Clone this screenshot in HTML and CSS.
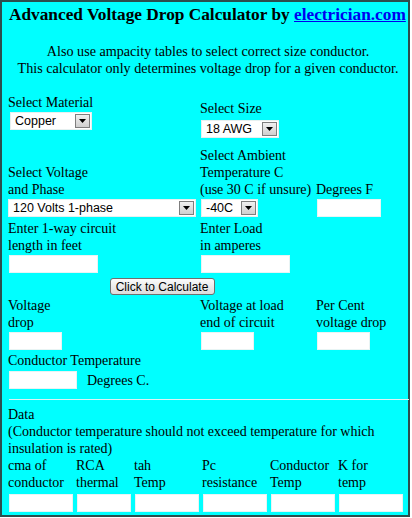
FILE: index.html
```html
<!DOCTYPE html>
<html>
<head>
<meta charset="utf-8">
<link rel="stylesheet" href="styles.css">
</head>
<body>
<div class="box">
  <h1 class="title">Advanced Voltage Drop Calculator by <a href="#">electrician.com</a></h1>
  <p class="intro">Also use ampacity tables to select correct size conductor.<br>This calculator only determines voltage drop for a given conductor.</p>

  <div class="row row-a">
    <div class="cell">
      <div class="lbl">Select Material</div>
      <div class="sel sel-material"><span class="sel-text">Copper</span><span class="arrow"><svg width="7" height="4" viewBox="0 0 7 4"><path d="M0 0H7L3.5 4Z" fill="#000"/></svg></span></div>
    </div>
    <div class="cell cell-size">
      <div class="lbl">Select Size</div>
      <div class="sel sel-size"><span class="sel-text">18 AWG</span><span class="arrow"><svg width="7" height="4" viewBox="0 0 7 4"><path d="M0 0H7L3.5 4Z" fill="#000"/></svg></span></div>
    </div>
    <div class="cell"></div>
  </div>

  <div class="row row-b">
    <div class="lbl">Select Voltage<br>and Phase</div>
    <div class="lbl">Select Ambient<br>Temperature C<br>(use 30 C if unsure)</div>
    <div class="lbl">Degrees F</div>
  </div>
  <div class="row row-ctl">
    <div class="sel sel-volt"><span class="sel-text">120 Volts 1-phase</span><span class="arrow"><svg width="7" height="4" viewBox="0 0 7 4"><path d="M0 0H7L3.5 4Z" fill="#000"/></svg></span></div>
    <div class="sel sel-temp"><span class="sel-text">-40C</span><span class="arrow"><svg width="7" height="4" viewBox="0 0 7 4"><path d="M0 0H7L3.5 4Z" fill="#000"/></svg></span></div>
    <input class="inp inp-f" type="text">
  </div>

  <div class="row row-c">
    <div class="lbl">Enter 1-way circuit<br>length in feet</div>
    <div class="lbl">Enter Load<br>in amperes</div>
    <div></div>
  </div>
  <div class="row row-ctl2">
    <input class="inp inp-len" type="text">
    <input class="inp inp-load" type="text">
    <div></div>
  </div>

  <div class="btn-row"><button class="btn" type="button">Click to Calculate</button></div>

  <div class="row row-d">
    <div class="lbl">Voltage<br>drop</div>
    <div class="lbl">Voltage at load<br>end of circuit</div>
    <div class="lbl">Per Cent<br>voltage drop</div>
  </div>
  <div class="row row-ctl3">
    <input class="inp inp-small" type="text">
    <input class="inp inp-small" type="text">
    <input class="inp inp-small" type="text">
  </div>

  <div class="lbl cond-lbl">Conductor Temperature</div>
  <div class="cond-row"><input class="inp inp-cond" type="text"><span class="degc">Degrees C.</span></div>

  <hr class="sep">

  <div class="data">
    <div class="lbl">Data<br>(Conductor temperature should not exceed temperature for which insulation is rated)</div>
    <div class="dgrid">
      <div class="lbl">cma of<br>conductor</div>
      <div class="lbl">RCA<br>thermal</div>
      <div class="lbl">tah<br>Temp</div>
      <div class="lbl">Pc<br>resistance</div>
      <div class="lbl">Conductor<br>Temp</div>
      <div class="lbl">K for<br>temp</div>
      <input class="inp d-w" type="text">
      <input class="inp d-n" type="text">
      <input class="inp d-w" type="text">
      <input class="inp d-w" type="text">
      <input class="inp d-w" type="text">
      <input class="inp d-w" type="text">
    </div>
  </div>
</div>
</body>
</html>
```
FILE: styles.css
```css
html, body {
  margin: 0;
  padding: 0;
  background: #ffffff;
}
body {
  font-family: "Liberation Serif", "Times New Roman", serif;
  font-size: 14px;
  line-height: 17px;
  color: #000;
}
.box {
  box-sizing: border-box;
  width: 410px;
  height: 517px;
  background: #00ffff;
  border: 2px solid #2c4e4e;
  padding: 0 0 0 6px;
}
.title {
  margin: 2px 0 0 1px;
  font-size: 17.3px;
  line-height: 22px;
  font-weight: bold;
  white-space: nowrap;
}
.title a {
  color: #0000ee;
  text-decoration: underline;
}
.intro {
  margin: 17px 0 0 0;
  text-align: center;
  width: 400px;
  font-size: 14.15px;
}
.row {
  display: grid;
  grid-template-columns: 192px 116px 92px;
}
.row-a {
  margin-top: 17px;
}
.cell {
  display: flex;
  flex-direction: column;
  align-items: flex-start;
}
.cell-size {
  padding-top: 6px;
}
.cell-size .sel {
  margin-top: 3px;
}
.sel {
  box-sizing: border-box;
  display: flex;
  align-items: center;
  justify-content: space-between;
  height: 18px;
  background: #fff;
  border: 1px solid #e6f0f0;
  font-family: "Liberation Sans", Arial, sans-serif;
  font-size: 12.5px;
  line-height: 14px;
  padding: 0 1px 0 4px;
}
.sel-material { width: 82px; margin-left: 2px; margin-top: 1px; }
.sel-size { width: 78px; margin-left: 1px; }
.sel-volt { width: 188px; margin-left: 0; }
.sel-temp { width: 57px; margin-left: 1px; }
.arrow {
  box-sizing: border-box;
  width: 15px;
  height: 14px;
  display: flex;
  align-items: center;
  justify-content: center;
  background: linear-gradient(#f0f0f0, #cfcfcf);
  border: 1px solid #7e7e7e;
}
.row-b {
  margin-top: 9px;
  align-items: end;
}
.row-ctl {
  margin-top: 1px;
  align-items: start;
}
.inp {
  box-sizing: border-box;
  height: 18px;
  margin: 0;
  padding: 0;
  background: #fff;
  border: 1px solid #e8f4f4;
  font: inherit;
}
.inp-f { width: 64px; margin-left: 1px; }
.row-c { margin-top: 3px; }
.row-ctl2 { margin-top: 1px; }
.inp-len { width: 89px; margin-left: 1px; }
.inp-load { width: 89px; margin-left: 1px; }
.btn-row {
  width: 308px;
  display: flex;
  justify-content: center;
  margin-top: 5px;
}
.btn {
  box-sizing: border-box;
  width: 105px;
  height: 17px;
  padding: 0;
  font-family: "Liberation Sans", Arial, sans-serif;
  font-size: 12px;
  line-height: 14px;
  color: #000;
  background: linear-gradient(#fbfbfb, #dcdcdc);
  border: 1px solid #6f6f6f;
  border-radius: 3px;
}
.row-d { margin-top: 2px; }
.row-ctl3 { margin-top: 1px; }
.inp-small { width: 53px; margin-left: 1px; }
.cond-lbl { margin-top: 2px; }
.cond-row {
  display: flex;
  align-items: center;
  margin-top: 2px;
}
.inp-cond { width: 68px; margin-left: 1px; }
.degc { margin-left: 10px; }
.sep {
  margin: 10px 0 0 1px;
  width: 400px;
  height: 0;
  border: 0;
  border-top: 1px solid #d8f4f4;
}
.data {
  margin-top: 6px;
}
.dgrid {
  display: grid;
  grid-template-columns: 68px 58px 68px 68px 68px 68px;
  align-items: start;
}
.dgrid .inp {
  margin-left: 1px;
  margin-top: 3px;
}
.d-w { width: 64px; }
.d-n { width: 54px; }
```
